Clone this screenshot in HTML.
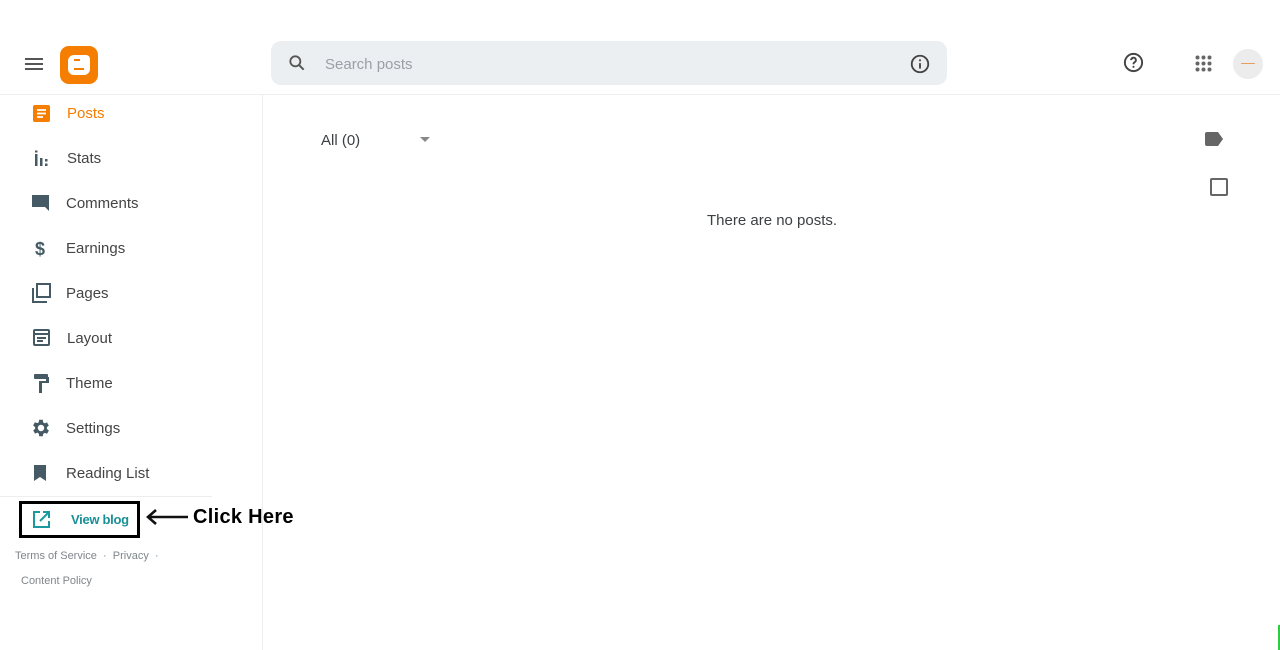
<!DOCTYPE html>
<html><head><meta charset="utf-8"><style>
*{margin:0;padding:0;box-sizing:border-box}
body{width:1280px;height:650px;overflow:hidden;background:#fff;font-family:"Liberation Sans",Arial,sans-serif;position:relative;color:#3c4043}
.a{position:absolute}
.nav{position:absolute;left:0;height:45px;width:262px}
.nav svg{position:absolute;left:30px;top:-11px}
.nav span{position:absolute;left:66px;top:-8px;font-size:15px;color:#444}
</style></head><body>
<div class="a" style="left:0;top:94px;width:1280px;height:1px;background:#eee"></div>
<div class="a" style="left:262px;top:95px;width:1px;height:555px;background:#eee"></div>
<div class="a" style="left:25px;top:58px;width:18px;height:2px;background:#555"></div>
<div class="a" style="left:25px;top:63px;width:18px;height:2px;background:#555"></div>
<div class="a" style="left:25px;top:68px;width:18px;height:2px;background:#555"></div>
<div class="a" style="left:60px;top:46px;width:38px;height:38px;background:#f57d00;border-radius:9px"></div>
<div class="a" style="left:68px;top:55px;width:22px;height:20px;background:#fff;border-radius:6px 4px 6px 6px"></div>
<div class="a" style="left:74px;top:59px;width:6px;height:2px;background:#f57d00"></div>
<div class="a" style="left:74px;top:68px;width:10px;height:2px;background:#f57d00"></div>
<div class="a" style="left:271px;top:41px;width:676px;height:44px;background:#eceff1;border-radius:10px"></div>
<svg class="a" style="left:287px;top:53px" width="20" height="20" viewBox="0 0 24 24"><circle cx="10" cy="10" r="6" fill="none" stroke="#555" stroke-width="2.2"/><path d="M14.5 14.5L20 20" stroke="#555" stroke-width="2.4"/></svg>
<div class="a" style="left:325px;top:56px;font-size:15px;color:#9aa0a6">Search posts</div>
<svg class="a" style="left:909px;top:53px" width="22" height="22" viewBox="0 0 24 24"><circle cx="12" cy="12" r="9" fill="none" stroke="#444" stroke-width="2"/><path d="M12 11v6M12 7v2" stroke="#444" stroke-width="2"/></svg>
<svg class="a" style="left:1122px;top:51px" width="23" height="23" viewBox="0 0 24 24"><circle cx="12" cy="12" r="9" fill="none" stroke="#444" stroke-width="2"/><path d="M9.5 9.5a2.5 2.5 0 1 1 3.5 2.3c-.8.4-1 1-1 2" fill="none" stroke="#444" stroke-width="2"/><circle cx="12" cy="16.5" r="1.1" fill="#444"/></svg>
<svg class="a" style="left:1195px;top:55px" width="17" height="17" viewBox="0 0 17 17" fill="#666"><circle cx="2.5" cy="2.5" r="2"/><circle cx="8.5" cy="2.5" r="2"/><circle cx="14.5" cy="2.5" r="2"/><circle cx="2.5" cy="8.5" r="2"/><circle cx="8.5" cy="8.5" r="2"/><circle cx="14.5" cy="8.5" r="2"/><circle cx="2.5" cy="14.5" r="2"/><circle cx="8.5" cy="14.5" r="2"/><circle cx="14.5" cy="14.5" r="2"/></svg>
<div class="a" style="left:1233px;top:49px;width:30px;height:30px;border-radius:50%;background:#ececec"></div>
<div class="a" style="left:1241px;top:63px;width:14px;height:1px;background:#e8a060"></div>
<div class="nav" style="top:113px"><svg width="22" height="22" viewBox="0 0 22 22"><rect x="3" y="3" width="17" height="17" rx="2" fill="#f57d00"/><path d="M7 8h9M7 11.5h9M7 15h6" stroke="#fff" stroke-width="1.8"/></svg><span style="color:#f57d00;left:67px">Posts</span></div>
<div class="nav" style="top:158px"><svg width="22" height="22" viewBox="0 0 22 22" fill="#455a64"><rect x="5" y="7" width="2.5" height="12"/><rect x="5" y="3.5" width="2.5" height="2"/><rect x="10" y="11" width="2.5" height="8"/><rect x="15" y="12" width="2.5" height="2.5"/><rect x="15" y="16.5" width="2.5" height="2.5"/></svg><span style="left:67px">Stats</span></div>
<div class="nav" style="top:203px"><svg width="22" height="22" viewBox="0 0 22 22"><path d="M2 3h17v12H2z M15 15l4 4v-4z" fill="#455a64"/></svg><span>Comments</span></div>
<div class="nav" style="top:248px"><svg width="22" height="22" viewBox="0 0 22 22"><text x="5" y="18" font-size="18" font-weight="bold" fill="#455a64" font-family="Liberation Sans">$</text></svg><span>Earnings</span></div>
<div class="nav" style="top:293px"><svg width="22" height="22" viewBox="0 0 22 22" fill="none" stroke="#455a64" stroke-width="2"><rect x="7" y="2" width="13" height="13"/><path d="M3 6v14h14"/></svg><span>Pages</span></div>
<div class="nav" style="top:338px"><svg width="22" height="22" viewBox="0 0 22 22" fill="none" stroke="#455a64" stroke-width="2"><rect x="4" y="3" width="15" height="15" rx="1"/><path d="M4 7h15M7 11h9M7 14h6"/></svg><span style="left:67px">Layout</span></div>
<div class="nav" style="top:383px"><svg width="22" height="22" viewBox="0 0 22 22" fill="#455a64"><rect x="4" y="2" width="14" height="5" rx="1"/><path d="M16 5h3v6h-7v3h-3v-5h7z"/><rect x="9" y="13" width="3" height="8"/></svg><span>Theme</span></div>
<div class="nav" style="top:428px"><svg width="22" height="22" viewBox="0 0 24 24" fill="#455a64"><path d="M19.4 13a7.5 7.5 0 0 0 0-2l2.1-1.6-2-3.5-2.5 1a7 7 0 0 0-1.7-1L15 3h-4l-.4 2.7a7 7 0 0 0-1.7 1l-2.5-1-2 3.5L6.6 11a7.5 7.5 0 0 0 0 2l-2.1 1.6 2 3.5 2.5-1a7 7 0 0 0 1.7 1L11 21h4l.4-2.7a7 7 0 0 0 1.7-1l2.5 1 2-3.5zM13 15.5a3.5 3.5 0 1 1 0-7 3.5 3.5 0 0 1 0 7z" transform="translate(-1 0)"/></svg><span>Settings</span></div>
<div class="nav" style="top:473px"><svg width="22" height="22" viewBox="0 0 22 22"><path d="M4 3h12v16l-6-4-6 4z" fill="#455a64"/></svg><span>Reading List</span></div>
<div class="a" style="left:0;top:496px;width:212px;height:1px;background:#eee"></div>
<div class="a" style="left:19px;top:501px;width:121px;height:37px;border:3px solid #000"></div>
<svg class="a" style="left:31px;top:509px" width="21" height="21" viewBox="0 0 21 21" fill="none" stroke="#1a9aa0" stroke-width="2"><path d="M9 3H3v15h15v-6"/><path d="M12 3h6v6M18 3l-9 9"/></svg>
<div class="a" style="left:71px;top:512px;font-size:13px;color:#1a8f96;font-weight:bold;letter-spacing:-0.3px">View blog</div>
<svg class="a" style="left:145px;top:507px" width="44" height="20" viewBox="0 0 44 20" fill="none" stroke="#111" stroke-width="2.6"><path d="M3 10h40M11 3l-8 7 8 7"/></svg>
<div class="a" style="left:193px;top:506px;font-size:20px;font-weight:bold;color:#000;letter-spacing:0.3px">Click Here</div>
<div class="a" style="left:15px;top:550px;font-size:11px;color:#80868b">Terms of Service &nbsp;·&nbsp; Privacy &nbsp;·</div>
<div class="a" style="left:21px;top:575px;font-size:11px;color:#80868b">Content Policy</div>
<div class="a" style="left:321px;top:132px;font-size:15px;color:#3c4043">All (0)</div>
<div class="a" style="left:420px;top:137px;width:0;height:0;border-left:5px solid transparent;border-right:5px solid transparent;border-top:5px solid #888"></div>
<svg class="a" style="left:1204px;top:131px" width="20" height="16" viewBox="0 0 20 16"><path d="M1 3a2 2 0 0 1 2-2h11l5 7-5 7H3a2 2 0 0 1-2-2z" fill="#666"/></svg>
<div class="a" style="left:1210px;top:178px;width:18px;height:18px;border:2px solid #666;border-radius:2px"></div>
<div class="a" style="left:707px;top:212px;font-size:15px;color:#3c4043">There are no posts.</div>
<div class="a" style="left:1278px;top:625px;width:2px;height:25px;background:#2ecc40"></div>
</body></html>
